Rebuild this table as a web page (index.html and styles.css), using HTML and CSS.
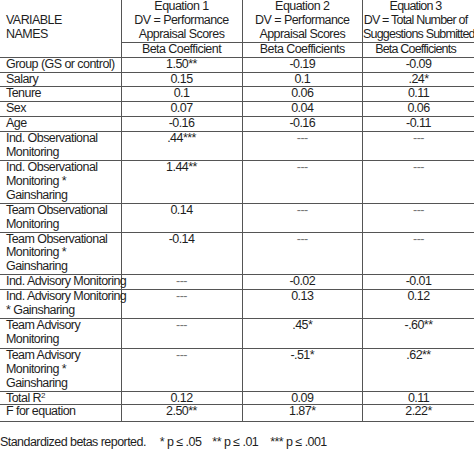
FILE: index.html
```html
<!DOCTYPE html>
<html>
<head>
<meta charset="utf-8">
<link rel="stylesheet" href="styles.css">
</head>
<body>
<div class="page">
<table class="tbl">
  <colgroup>
    <col class="c1"><col class="c2"><col class="c3"><col class="c4">
  </colgroup>
  <thead>
    <tr>
      <th rowspan="2" class="name head-name">VARIABLE<br>NAMES</th>
      <th class="val">Equation 1<br>DV = Performance<br>Appraisal Scores</th>
      <th class="val">Equation 2<br>DV = Performance<br>Appraisal Scores</th>
      <th class="val last">Equation 3<br>DV = Total Number of<br>Suggestions Submitted</th>
    </tr>
    <tr>
      <th class="val">Beta Coefficient</th>
      <th class="val">Beta Coefficients</th>
      <th class="val last">Beta Coefficients</th>
    </tr>
  </thead>
  <tbody>
    <tr><td class="name">Group (GS or control)</td><td class="val">1.50**</td><td class="val">-0.19</td><td class="val last">-0.09</td></tr>
    <tr><td class="name">Salary</td><td class="val">0.15</td><td class="val">0.1</td><td class="val last">.24*</td></tr>
    <tr><td class="name">Tenure</td><td class="val">0.1</td><td class="val">0.06</td><td class="val last">0.11</td></tr>
    <tr><td class="name">Sex</td><td class="val">0.07</td><td class="val">0.04</td><td class="val last">0.06</td></tr>
    <tr><td class="name">Age</td><td class="val">-0.16</td><td class="val">-0.16</td><td class="val last">-0.11</td></tr>
    <tr><td class="name">Ind. Observational<br>Monitoring</td><td class="val">.44***</td><td class="val dash">---</td><td class="val dash last">---</td></tr>
    <tr><td class="name">Ind. Observational<br>Monitoring *<br>Gainsharing</td><td class="val">1.44**</td><td class="val dash">---</td><td class="val dash last">---</td></tr>
    <tr><td class="name">Team Observational<br>Monitoring</td><td class="val">0.14</td><td class="val dash">---</td><td class="val dash last">---</td></tr>
    <tr><td class="name">Team Observational<br>Monitoring *<br>Gainsharing</td><td class="val">-0.14</td><td class="val dash">---</td><td class="val dash last">---</td></tr>
    <tr><td class="name">Ind. Advisory Monitoring</td><td class="val dash">---</td><td class="val">-0.02</td><td class="val last">-0.01</td></tr>
    <tr><td class="name">Ind. Advisory Monitoring<br>* Gainsharing</td><td class="val dash">---</td><td class="val">0.13</td><td class="val last">0.12</td></tr>
    <tr class="tall"><td class="name">Team Advisory<br>Monitoring</td><td class="val dash">---</td><td class="val">.45*</td><td class="val last">-.60**</td></tr>
    <tr><td class="name">Team Advisory<br>Monitoring *<br>Gainsharing</td><td class="val dash">---</td><td class="val">-.51*</td><td class="val last">.62**</td></tr>
    <tr class="short"><td class="name">Total R<sup>2</sup></td><td class="val">0.12</td><td class="val">0.09</td><td class="val last">0.11</td></tr>
    <tr class="ftall"><td class="name">F for equation</td><td class="val">2.50**</td><td class="val">1.87*</td><td class="val last">2.22*</td></tr>
  </tbody>
</table>
<p class="note"><span>Standardized betas reported.</span><span class="n1">* p ≤ .05</span><span class="n2">** p ≤ .01</span><span class="n3">*** p ≤ .001</span></p>
</div>
</body>
</html>
```

FILE: styles.css
```css
html, body {
  margin: 0;
  padding: 0;
  background: #ffffff;
}
body {
  width: 474px;
  height: 449px;
  overflow: hidden;
  font-family: "Liberation Sans", Arial, sans-serif;
  font-size: 12.5px;
  letter-spacing: -0.55px;
  color: #1e1e1e;
}
.page {
  width: 474px;
}
.tbl {
  border-collapse: collapse;
  table-layout: fixed;
  width: 474px;
}
.c1 { width: 121px; }
.c2 { width: 121px; }
.c3 { width: 120.5px; }
.c4 { width: 111.5px; }
.tbl th, .tbl td {
  padding: 0;
  line-height: 13.9px;
  font-weight: normal;
  border-bottom: 1px solid #555;
  vertical-align: top;
  white-space: nowrap;
  overflow: visible;
}
.tbl th + th, .tbl td + td, .tbl thead tr:nth-child(2) th {
  border-left: 1px solid #555;
}
.name {
  text-align: left;
  padding-left: 6px !important;
}
.head-name {
  vertical-align: middle !important;
}
.val {
  text-align: center;
}
.tbl thead .last {
  padding-right: 6px;
  letter-spacing: -0.8px;
}
.dash {
  color: #777;
}
sup {
  font-size: 8px;
  line-height: 0;
  vertical-align: 4px;
}
.short td {
  height: 12px;
  line-height: 12px;
}
.ftall td {
  height: 16px;
}
.tall td {
  height: 29px;
}
.note {
  margin: 13px 0 0 0;
  line-height: 14px;
  white-space: nowrap;
}
.n1 { margin-left: 14px; }
.n2 { margin-left: 11px; }
.n3 { margin-left: 12px; }
```
